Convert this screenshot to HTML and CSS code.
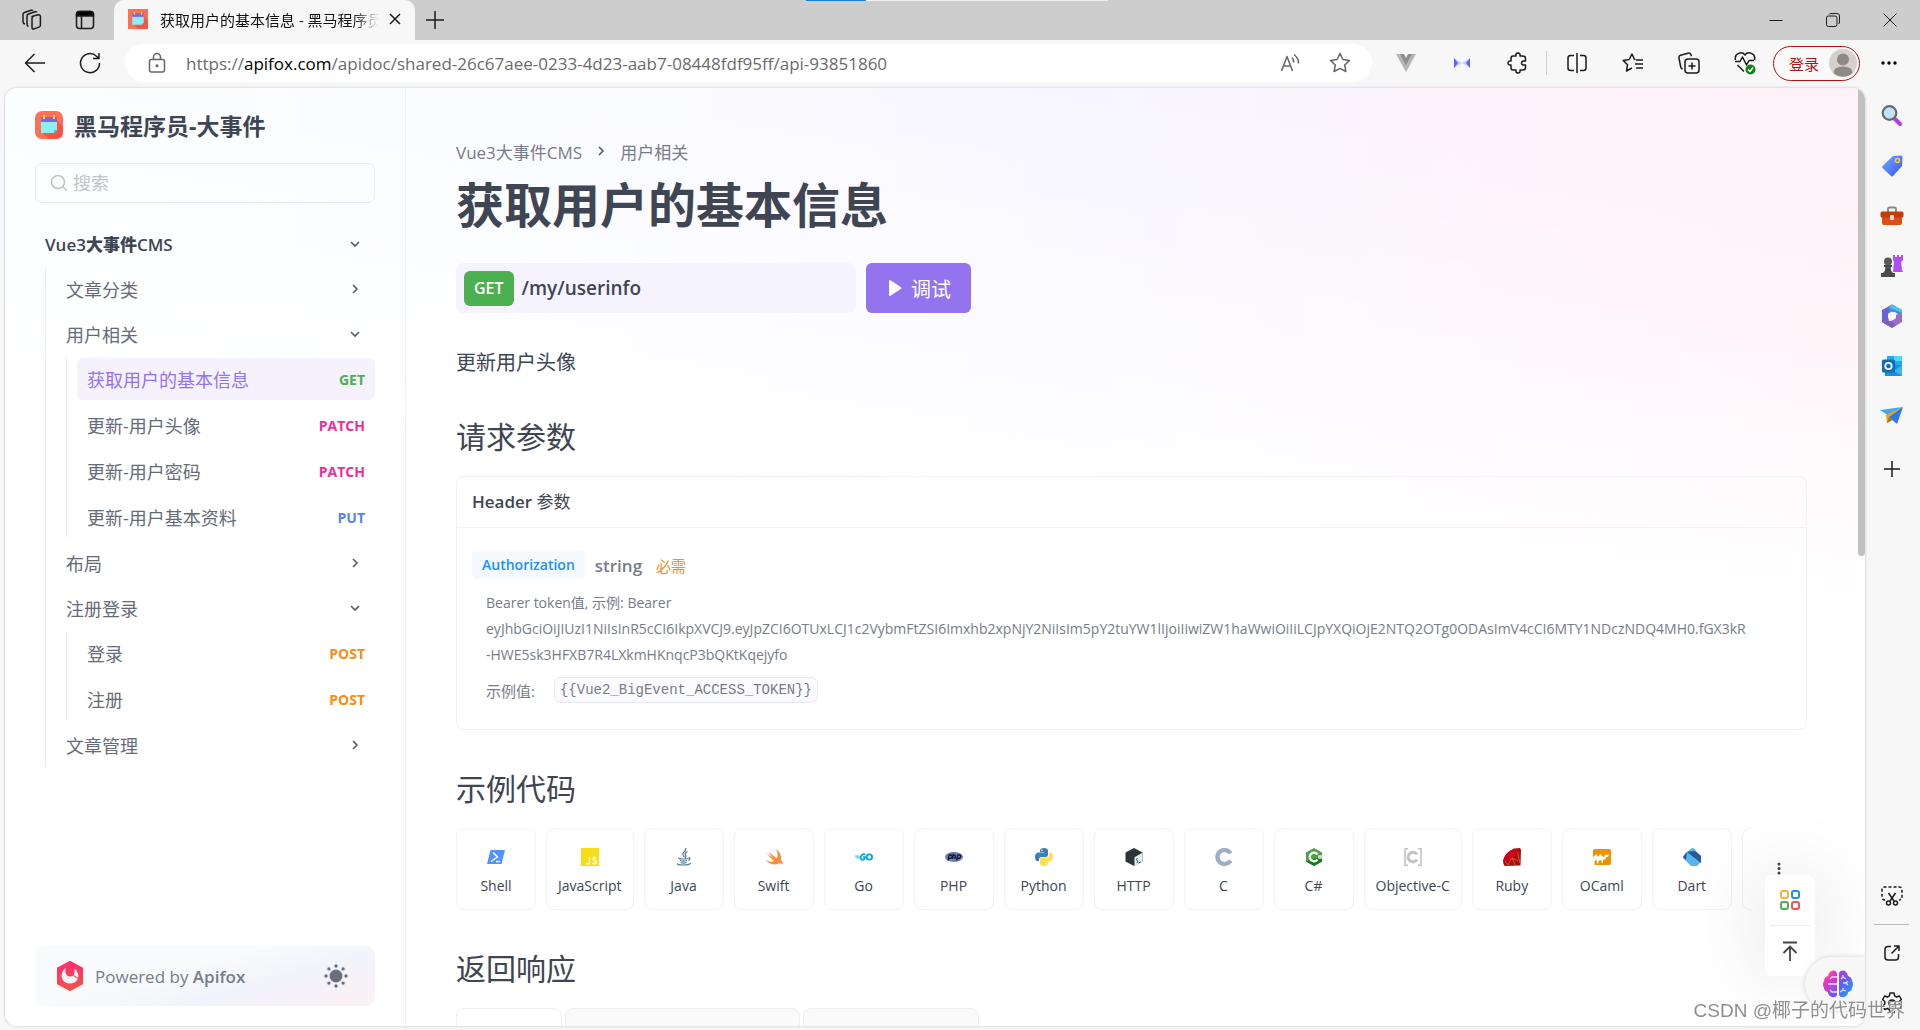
FILE: index.html
```html
<!DOCTYPE html>
<html lang="zh-CN">
<head>
<meta charset="utf-8">
<title>获取用户的基本信息 - 黑马程序员-大事件</title>
<link rel="stylesheet" href="styles.css">
</head>
<body>
<div class="browser">
  <header class="titlebar">
    <button class="tool tool-tabs" aria-label="工作区"><svg width="24" height="24" viewBox="0 0 24 24" class="line"><path d="M12 7.5 18 5.8q2-.4 2.400 1.400v9q0 1.400-1.400 1.900l-5 1.800q-2 .5-2-1.500V9.500q0-1.500 1-2z" transform="translate(0 1)"/><path d="M8.500 18.500q-1.500-.5-1.500-2.500V8q0-1.500 1.500-2L15 3.800q1.500-.4 2 .4M5 16q-2-.5-2-2.500V6.500Q3 5 4.500 4.500L11 2.300q1.500-.4 2 .4"/></svg></button>
    <button class="tool tool-vertical" aria-label="标签操作"><svg width="20" height="20" viewBox="0 0 20 20" class="line"><rect x="1.500" y="1.500" width="17" height="17" rx="3"/><path d="M1.500 6V4.500q0-3 3-3h11q3 0 3 3V6z" fill="#000"/><path d="M6.500 6v12"/></svg></button>
    <div class="tab">
      <svg width="20" height="20" viewBox="0 0 28 28"><rect width="28" height="28" fill="#ff6f55"/><path d="m8 22 13-14 7 8v12H14z" fill="#f45746"/><path d="M6 9h16v10l-3 3H6z" fill="#8ceef5"/><path d="M6 6h16v5H6z" fill="#7a68dc"/><path d="M9 4v4M19 4v4" stroke="#ffd23f" stroke-width="2"/></svg>
      <span class="tab-title">获取用户的基本信息 - 黑马程序员-大事件</span>
      <button class="tool tab-close" aria-label="关闭标签页"><svg width="12" height="12" viewBox="0 0 12 12" class="line"><path d="m1 1 10 10M11 1 1 11"/></svg></button>
    </div>
    <button class="tool tab-new" aria-label="新建标签页"><svg width="18" height="18" viewBox="0 0 18 18" class="line"><path d="M9 0v18M0 9h18"/></svg></button>
    <span class="preview-strip"></span>
    <div class="window-buttons">
      <button class="tool" aria-label="最小化"><svg width="14" height="14" viewBox="0 0 14 14" class="thin"><path d="M.5 7.500h13"/></svg></button>
      <button class="tool" aria-label="还原"><svg width="14" height="14" viewBox="0 0 14 14" class="thin"><rect x=".5" y="3" width="10.500" height="10.500" rx="2"/><path d="M3 1.500Q3.500.5 5 .5h6q2.500 0 2.500 2.500v6q0 1.500-1 2"/></svg></button>
      <button class="tool" aria-label="关闭"><svg width="14" height="14" viewBox="0 0 14 14" class="thin"><path d="m.5.5 13 13m0-13-13 13"/></svg></button>
    </div>
  </header>

  <div class="toolbar">
    <button class="tool nav-tool" aria-label="返回"><svg width="22" height="20" viewBox="0 0 22 20" class="line"><path d="M21 10H1.500M10.500 1l-9 9 9 9"/></svg></button>
    <button class="tool nav-tool" aria-label="刷新"><svg width="22" height="22" viewBox="0 0 22 22" class="line"><path d="M20.500 11A9.500 9.500 0 1 1 17.500 4.200L20 6.500M20 1v5.500h-6"/></svg></button>
    <div class="address">
      <svg width="18" height="22" viewBox="0 0 18 22" class="line gray"><rect x="1.500" y="7.500" width="15" height="12.500" rx="2"/><path d="M5.500 7.500V5a3.500 3.500 0 0 1 7 0v2.500"/><circle cx="9" cy="13.800" r=".8" fill="#666"/></svg>
      <div class="url" role="textbox" aria-label="地址栏">https://<span class="host">apifox.com</span>/apidoc/shared-26c67aee-0233-4d23-aab7-08448fdf95ff/api-93851860</div>
      <button class="tool addr-tool" aria-label="大声朗读"><svg width="20" height="20" viewBox="0 0 20 20" class="line gray"><path d="M1.500 18 7 3.500 12.500 18M3.500 13h7M12 4.500q2 2 1.500 5M14 1.500q5 4 4.500 9"/></svg></button>
      <button class="tool addr-tool" aria-label="收藏"><svg width="22" height="22" viewBox="0 0 22 22" class="line gray"><path d="m11 1.500 2.900 6 6.600.9-4.800 4.600 1.200 6.500-5.900-3.100-5.900 3.100 1.200-6.500L1.500 8.400l6.600-.9z"/></svg></button>
    </div>
    <div class="extensions">
      <button class="tool ext" aria-label="Vue"><svg width="20" height="20" viewBox="0 0 20 20"><path d="M0 1h7l3 5 3-5h7L10 19z" fill="#b5b5b5"/><path d="M4 1h4l2 4 2-4h4l-6 11z" fill="#8e8e8e"/></svg></button>
      <button class="tool ext" aria-label="扩展"><svg width="16" height="12" viewBox="0 0 16 12"><path d="M0 1l8 5-8 5zM16 1 8 6l8 5z" fill="#c9cdff"/><path d="m0 1 4 5-4 5zM16 1l-4 5 4 5z" fill="#5968f8"/></svg></button>
      <button class="tool ext" aria-label="浏览器扩展"><svg width="22" height="22" viewBox="0 0 22 22" class="line"><path d="M6 4h3q-.5-3 2-3t2 3h3q2.500 0 2.500 2.500V9q-4-.5-4 2t4 2v2.500Q18.500 18 16 18h-3q.5 3-2 3t-2-3H6q-2 0-2-2.500V13q-3 .5-3-2t3-2V6.500Q4 4 6 4z"/></svg></button>
      <span class="ext-divider"></span>
      <button class="tool ext" aria-label="分屏"><svg width="20" height="20" viewBox="0 0 20 20" class="line"><path d="M7 2.500H3.500Q1 2.500 1 5v10q0 2.500 2.500 2.500H7M13 2.500h3.500Q19 2.500 19 5v10q0 2.500-2.500 2.500H13M10 0v20"/></svg></button>
      <button class="tool ext" aria-label="收藏夹"><svg width="22" height="22" viewBox="0 0 22 22" class="line"><path d="M13.500 7.500h-1L10 2 7.200 7.500l-6 .9 4.300 4.300-1 6.300 5.500-3M14 8h7M13 12h8M14 16h7"/></svg></button>
      <button class="tool ext" aria-label="集锦"><svg width="22" height="22" viewBox="0 0 22 22" class="line"><rect x="7" y="7" width="14" height="14" rx="3"/><path d="M14 10.500v7M10.500 14h7M4.500 17Q3 16.500 2.500 14L1 6q-.5-2 1.500-2.700L10 1.200q2-.5 3 1.500l.5 1.500"/></svg></button>
      <button class="tool ext" aria-label="浏览器概要"><svg width="22" height="24" viewBox="0 0 22 24" class="line"><path d="M1.500 9C0 2 8 0 11 4c3-4 11-2 9.500 5M1 10.500h5L8.500 6l4 8 2.500-4.500h5M3.500 14l6.500 6.500"/><circle cx="16.500" cy="18.500" r="5" fill="#128012" stroke="none"/><path d="m14 18.500 2 2 3-4" stroke="#fff"/></svg></button>
      <button class="login">登录<svg width="28" height="28" viewBox="0 0 28 28"><circle cx="14" cy="14" r="14" fill="#d3d0cd"/><circle cx="14" cy="10.500" r="6" fill="#8e8986"/><path d="M4.500 24q0-6.500 9.500-6.500t9.500 6.500a14 14 0 0 1-19 0z" fill="#8e8986"/></svg></button>
      <button class="tool more" aria-label="更多"><svg width="18" height="6" viewBox="0 0 18 6"><circle cx="3" cy="3" r="1.700"/><circle cx="9" cy="3" r="1.700"/><circle cx="15" cy="3" r="1.700"/></svg></button>
    </div>
  </div>

  <div class="stage">
    <div class="page">
      <aside class="sidebar">
        <div class="brand">
          <svg width="28" height="28" viewBox="0 0 28 28"><rect width="28" height="28" rx="7" fill="#ff7058"/><path d="m8 22 13-14 7 8v5q0 7-7 7h-7z" fill="#fb5243"/><path d="M6 9h16v10l-3 3H6z" fill="#8ceef5"/><path d="m22 19-3 3v-3z" fill="#3cc1dc"/><path d="M6 6h16v5H6z" fill="#7a68dc"/><path d="M9 4v4M19 4v4" stroke="#ffd23f" stroke-width="2"/></svg>
          <span>黑马程序员-大事件</span>
        </div>
        <label class="search">
          <svg width="18" height="18" viewBox="0 0 18 18"><circle cx="8" cy="8" r="6.500"/><path d="m12.800 12.800 4 4"/></svg>
          <input type="search" placeholder="搜索" aria-label="搜索">
        </label>
        <nav class="tree">
          <a href="#" class="row root"><span>Vue3<b>大事件</b>CMS</span><svg class="chev" viewBox="0 0 10 10"><path d="m1 3 4 4 4-4"/></svg></a>
          <div class="branch">
            <a href="#" class="row"><span>文章分类</span><svg class="chev" viewBox="0 0 10 10"><path d="m3 1 4 4-4 4"/></svg></a>
            <a href="#" class="row"><span>用户相关</span><svg class="chev" viewBox="0 0 10 10"><path d="m1 3 4 4 4-4"/></svg></a>
            <div class="branch leafs">
              <a href="#" class="leaf active"><span>获取用户的基本信息</span><b class="get">GET</b></a>
              <a href="#" class="leaf"><span>更新-用户头像</span><b class="patch">PATCH</b></a>
              <a href="#" class="leaf"><span>更新-用户密码</span><b class="patch">PATCH</b></a>
              <a href="#" class="leaf"><span>更新-用户基本资料</span><b class="put">PUT</b></a>
            </div>
            <a href="#" class="row"><span>布局</span><svg class="chev" viewBox="0 0 10 10"><path d="m3 1 4 4-4 4"/></svg></a>
            <a href="#" class="row"><span>注册登录</span><svg class="chev" viewBox="0 0 10 10"><path d="m1 3 4 4 4-4"/></svg></a>
            <div class="branch leafs">
              <a href="#" class="leaf"><span>登录</span><b class="post">POST</b></a>
              <a href="#" class="leaf"><span>注册</span><b class="post">POST</b></a>
            </div>
            <a href="#" class="row"><span>文章管理</span><svg class="chev" viewBox="0 0 10 10"><path d="m3 1 4 4-4 4"/></svg></a>
          </div>
        </nav>
        <div class="powered">
          <svg width="28" height="30" viewBox="0 0 28 30"><defs><linearGradient id="fox" x1="0" y1="0" x2="0" y2="1"><stop offset="0" stop-color="#ff2e6c"/><stop offset="1" stop-color="#f4524b"/></linearGradient></defs><path d="M14 1 26 7.500v15L14 29 2 22.500v-15z" fill="url(#fox)" stroke="url(#fox)" stroke-width="2" stroke-linejoin="round"/><path d="M9.500 7C3 12 5 22.500 14 22.500S25 13 18.500 7.500q1 8-4.500 8T9.500 7z" fill="#f6f2f4"/><path d="m17 14 5 3.500" stroke="#f0687c" stroke-width="1.500"/></svg>
          <a href="#">Powered by <b>Apifox</b></a>
          <button class="tool" aria-label="切换主题"><svg width="24" height="24" viewBox="0 0 24 24" fill="#6b6f7d"><circle cx="12" cy="12" r="6.500"/><g><circle cx="12" cy="2" r="1.700"/><circle cx="12" cy="22" r="1.700"/><circle cx="2" cy="12" r="1.700"/><circle cx="22" cy="12" r="1.700"/><circle cx="4.900" cy="4.900" r="1.700"/><circle cx="19.100" cy="4.900" r="1.700"/><circle cx="4.900" cy="19.100" r="1.700"/><circle cx="19.100" cy="19.100" r="1.700"/></g></svg></button>
        </div>
      </aside>

      <main class="doc">
        <nav class="crumbs"><a href="#">Vue3大事件CMS</a><svg class="chev" viewBox="0 0 10 10"><path d="m3 1 4 4-4 4"/></svg><a href="#">用户相关</a></nav>
        <h1>获取用户的基本信息</h1>
        <div class="endpoint">
          <div class="path"><b>GET</b><span>/my/userinfo</span></div>
          <button class="debug"><svg width="14" height="18" viewBox="0 0 14 18"><path d="M2 2v14l10.500-7z" fill="#fff" stroke="#fff" stroke-width="2" stroke-linejoin="round"/></svg>调试</button>
        </div>
        <p class="summary">更新用户头像</p>

        <h2>请求参数</h2>
        <section class="params">
          <h3><b>Header</b> 参数</h3>
          <div class="param">
            <div class="param-head"><b class="name">Authorization</b><span class="type">string</span><span class="required">必需</span></div>
            <p class="param-desc">Bearer token值, 示例: Bearer<br>eyJhbGciOiJIUzI1NiIsInR5cCI6IkpXVCJ9.eyJpZCI6OTUxLCJ1c2VybmFtZSI6Imxhb2xpNjY2NiIsIm5pY2tuYW1lIjoiIiwiZW1haWwiOiIiLCJpYXQiOjE2NTQ2OTg0ODAsImV4cCI6MTY1NDczNDQ4MH0.fGX3kR<br>-HWE5sk3HFXB7R4LXkmHKnqcP3bQKtKqejyfo</p>
            <div class="example"><span>示例值:</span><code>{{Vue2_BigEvent_ACCESS_TOKEN}}</code></div>
          </div>
        </section>

        <h2>示例代码</h2>
        <div class="langs-wrap">
          <div class="langs">
            <button class="lang"><svg viewBox="0 0 18 18"><path d="M3.500 2H18l-3.500 14H0z" fill="#5391fe"/><path d="m6 4.500 4.500 4.500-6.500 4.500M9 13.500h4" fill="none" stroke="#fff" stroke-width="1.500"/></svg>Shell</button>
            <button class="lang"><svg viewBox="0 0 18 18"><path d="M0 0h18v18H0z" fill="#f5de19"/><path d="M8.500 9v5.500q0 1.500-1.500 1.500t-1.500-1.300M15.500 10q-3.500-1.700-3.500.8 0 1.200 1.800 1.700t1.700 1.800q-.3 2.500-4 .7" fill="none" stroke="#fff" stroke-width="1.400"/></svg>JavaScript</button>
            <button class="lang"><svg viewBox="0 0 18 18" fill="none" stroke="#4e7896" stroke-width="1.200"><path d="M10.500 0q1 2-1.500 4t.5 5M12.500 3.500Q9.500 5 10.500 7t-.5 3M4 9.500q-1 1.500 4 1.500t5-1M13.500 9.500q3 0 0 3M5 12.500q4 1.200 7 0M5.500 14.500q3 1.200 6 0M3 15.500q-2 1.500 5 1.500t7.500-2"/></svg>Java</button>
            <button class="lang"><svg viewBox="0 0 18 18"><path d="M11 1q6 4.500 4.800 10.500 2.400 3 1.700 5-1.500-2-4-1Q7 18.500.5 12q5 3 8.500 1Q4.500 9.500 1.500 5q4 3.500 6.500 5Q5 6.500 3.500 3.500q4 4 8.500 7Q13.500 6 11 1z" fill="#fd8a3b"/></svg>Swift</button>
            <button class="lang"><svg viewBox="0 0 20 18" fill="none" stroke="#00acd7"><path d="M0 8h5M1.500 10H5" stroke-width="1"/><path d="M11.500 6.500q-2-1.500-4 .5t-1 4q2 2 4 0l.8-1.800H9" stroke-width="2"/><ellipse cx="16" cy="9" rx="3" ry="3" stroke-width="2"/></svg>Go</button>
            <button class="lang"><svg viewBox="0 0 18 18"><ellipse cx="9" cy="9" rx="9" ry="5" fill="#6f7cb6"/><path d="M3 12.500 4.200 7h2q1.500.3.800 2t-3 1.500M7.500 11 8.800 5.500M8.300 7.500q2.500-.7 2 1l-.5 2.500M11.500 12.500 12.700 7h1.800q1.700.3 1 2t-3 1.500" fill="none" stroke="#111833" stroke-width="1.300"/></svg>PHP</button>
            <button class="lang"><svg viewBox="0 0 18 18"><path d="M9 0q4 0 4 2.500v4Q13 9 10.500 9h-4Q4 9 4 11.500v1.500H2.500Q0 13 0 9t3-4.500h6V4H5V2.500Q5 0 9 0z" fill="#3c7fb3"/><path d="M9 18q-4 0-4-2.500v-4Q5 9.500 7.500 9.500h4Q14 9.500 14 7V5h1.500Q18 5 18 9t-3 4.500H9v.5h4v1.500Q13 18 9 18z" fill="#ffdf4f"/><circle cx="7" cy="2.200" r=".8" fill="#fff"/><circle cx="11" cy="15.800" r=".8" fill="#fff"/></svg>Python</button>
            <button class="lang"><svg viewBox="0 0 18 18"><path d="M9 0l8.500 4.500v9L9 18 .5 13.500v-9z" fill="#2c3535"/><path d="m17.500 4.700-8 4.500V18l8-4.500z" fill="#dceef0"/><path d="M12.500 10q-2 1.500-.3 2.500t-.5 2.500M13.500 15l2-1" stroke="#3a5550" fill="none"/></svg>HTTP</button>
            <button class="lang"><svg viewBox="0 0 18 18"><path d="M15.500 5.500A7 7 0 1 0 15.500 12.500" fill="none" stroke="#9bafc8" stroke-width="4.300"/></svg>C</button>
            <button class="lang"><svg viewBox="0 0 18 18"><path d="M9 0l8 4.500v9L9 18 1 13.500v-9z" fill="#4da04a"/><path d="m1 13.500 16-5v5L9 18z" fill="#167b16"/><path d="M12.500 6.500A4.300 4.300 0 1 0 12.500 11.500" fill="none" stroke="#fff" stroke-width="2.300"/><path d="M13 8.200h4M13 9.900h4M14 7v4M15.800 7v4" stroke="#fff" stroke-width=".8"/></svg>C#</button>
            <button class="lang"><svg viewBox="0 0 18 18" fill="none" stroke="#c4c4c4"><path d="M4 .8H1v16.400h3M14 .8h3v16.400h-3" stroke-width="1.600"/><path d="M13 6.500A4.800 4.800 0 1 0 13 11.500" stroke-width="3"/></svg>Objective-C</button>
            <button class="lang"><svg viewBox="0 0 18 18"><path d="M11 .5 17 0l1 2-.5 15.500L2 18q-2-1-2-6Q3 4 11 .5z" fill="#a61206"/><path d="M10.500 2q4-1 4 1.500T9 10t-7 3q-2-2 .5-6t8-5z" fill="#d0021b"/><path d="M14.500 4.500 17 15M9 10l3 7M2 13l3 4 4-7 6 3" fill="none" stroke="#f06a58" stroke-width=".7"/></svg>Ruby</button>
            <button class="lang"><svg viewBox="0 0 18 18"><rect y="1" width="18" height="16" rx="2" fill="#f29100"/><path d="M0 9q2-1 3-3 1 1 2 3l2-3q2 1 3 3 2 0 2-2l4-.5-1 2q-2 0-3 3l-2 .5v3H9l-1-3-2 .5-1 3H4l-.500-4-2 1.500V17H0z" fill="#fff"/></svg>OCaml</button>
            <button class="lang"><svg viewBox="0 0 18 18"><path d="m4 4 5-4q3 0 4 3l5 5v6l-4 4H8L0 10q0-3 4-6z" fill="#57b6f0"/><path d="M4 4q4-1 8-1l6 5v7L4 4 3 12 0 9z" fill="#255a9b"/></svg>Dart</button>
            <button class="lang" aria-label="更多语言"></button>
          </div>
          <button class="tool langs-more" aria-label="更多"><svg width="4" height="14" viewBox="0 0 4 14" fill="#404554"><circle cx="2" cy="2" r="1.500"/><circle cx="2" cy="6.500" r="1.500"/><circle cx="2" cy="11" r="1.500"/></svg></button>
        </div>

        <h2>返回响应</h2>
        <div class="tabs"><button aria-label="成功"></button><button aria-label="记录不存在"></button><button aria-label="参数错误"></button></div>
      </main>

      <span class="scroll-thumb"></span>
      <div class="float-tools">
        <button aria-label="应用"><svg width="20" height="20" viewBox="0 0 20 20" fill="none" stroke-width="2"><rect x="1" y="1" width="7" height="7" rx="2" stroke="#f9b233"/><rect x="12" y="1" width="7" height="7" rx="2" stroke="#1890ff"/><rect x="1" y="12" width="7" height="7" rx="2" stroke="#4caf50"/><rect x="12" y="12" width="7" height="7" rx="2" stroke="#f94d4f"/></svg></button>
        <button aria-label="回到顶部"><svg width="16" height="20" viewBox="0 0 16 20" fill="none" stroke="#404554" stroke-width="1.800"><path d="M1 1.500h14M8 20V5.500M1.500 12 8 5.500l6.500 6.500"/></svg></button>
      </div>
      <button class="brain" aria-label="助手"><svg width="30" height="28" viewBox="0 0 30 28"><defs><linearGradient id="bl" x1="0" y1="0" x2=".6" y2="1"><stop offset="0" stop-color="#ff9a2f"/><stop offset=".4" stop-color="#f032c0"/><stop offset="1" stop-color="#7558f0"/></linearGradient><linearGradient id="br" x1="0" y1="0" x2=".5" y2="1"><stop offset="0" stop-color="#c832e0"/><stop offset=".5" stop-color="#6060f4"/><stop offset="1" stop-color="#2796ff"/></linearGradient></defs><path d="M14 3v22q-1 3-5 2-4-1-4-5-4-1-4-4-2-4 0-7 0-4 4-5 1-5 5-5.500 3-.5 4 2.500z" fill="url(#bl)"/><path d="M16 3v22q1 3 5 2 4-1 4-5 4-1 4-4 2-4 0-7 0-4-4-5-1-5-5-5.500-3-.5-4 2.500z" fill="url(#br)"/><path d="M14 7H9L7 9M14 14H5M14 22H9l-2-2M18 9l2-2v-2M20 7l3 2M20 13h3l2-2M23 13l2 2M17 22l3-2v-2M20 20l3 1" fill="none" stroke="#fff" stroke-width="1.300" stroke-opacity=".8"/></svg></button>
    </div>

    <aside class="edge-bar">
      <button class="tool" aria-label="搜索"><svg width="22" height="22" viewBox="0 0 22 22"><path d="m14 14 5 5" stroke="#b93af2" stroke-width="4" stroke-linecap="round"/><circle cx="8.500" cy="8" r="6.800" fill="#bfe3fa" stroke="#68696b" stroke-width="2.200"/></svg></button>
      <button class="tool" aria-label="购物"><svg width="22" height="22" viewBox="0 0 22 22"><defs><linearGradient id="tag" x1="0" y1="0" x2="1" y2="1"><stop offset="0" stop-color="#6eb4ff"/><stop offset="1" stop-color="#3a4df5"/></linearGradient></defs><path d="m12 1 8-.5q1.500 0 1.500 1.500l-.5 9-9 10q-1 1-2 0L1.500 13q-1-1 0-2z" fill="url(#tag)"/><circle cx="16.500" cy="5.500" r="2" fill="#5b72ff" stroke="#ffd02e" stroke-width="1.500"/></svg></button>
      <button class="tool" aria-label="工具"><svg width="24" height="20" viewBox="0 0 24 20"><path d="M8 6V3q0-1.500 1.500-1.500h5Q16 1.500 16 3v3" fill="none" stroke="#878787" stroke-width="1.800"/><rect x="2" y="8" width="20" height="11" rx="2" fill="#dc4f17"/><rect x=".5" y="5.500" width="23" height="6" rx="1.500" fill="#c23d0e"/><rect x="10" y="9" width="4" height="5" rx="1" fill="#d9d9d9"/></svg></button>
      <button class="tool" aria-label="游戏"><svg width="24" height="24" viewBox="0 0 24 24"><path d="M13 1h2v2h2V1h2v2h2V1h2v5l-2 2 1 8 1 2H13l1-10-1-2z" fill="#b44bf5"/><circle cx="8" cy="7.500" r="4" fill="#5a5a5a"/><path d="M4 11h8v2h-1.500q0 4 2.500 6h2v4H1v-4h2q2.500-2 2.500-6H4z" fill="#4a4a4a"/></svg></button>
      <button class="tool" aria-label="Microsoft 365"><svg width="22" height="24" viewBox="0 0 22 24"><path d="M11 .5 14 2 8 7v7l-2 7-5-3V6z" fill="#6a63d0"/><path d="m11 .5 10 5.500v7l-7-5-6 1V3.500z" fill="#3b8fe8"/><path d="m8 3.500 3-3L21 6v3z" fill="#4fc0ea"/><path d="M21 9v9l-10 6-7-4 9-5 1-4z" fill="#9a6cc8"/><path d="M1 16v2l10 6 4-3-8-5z" fill="#7b5fc0"/><path d="m11 7.500 4 2.200v4.600l-4 2.200-4-2.200V9.700z" fill="#f7f7f7"/></svg></button>
      <button class="tool" aria-label="Outlook"><svg width="22" height="22" viewBox="0 0 22 22"><path d="M6 1h15v9H6z" fill="#28a8ea"/><path d="M13 1h8v5h-8z" fill="#50d9ff"/><path d="M4 10h17v11H4z" fill="#1490df"/><path d="m21 10-8 6 8 5z" fill="#35b8f1"/><rect x="1" y="4.500" width="13" height="13" rx="1.500" fill="#0f6cbd"/><circle cx="7.500" cy="11" r="3.200" fill="none" stroke="#fff" stroke-width="1.800"/></svg></button>
      <button class="tool" aria-label="Drop"><svg width="24" height="20" viewBox="0 0 24 20"><path d="m0 4 23-3-14 9z" fill="#40a8f2"/><path d="m23 1-17 8 1 8z" fill="#f0a21a"/><path d="M23 1 9 11l8 7z" fill="#2779ea"/><path d="m7 17 2-6 4 3z" fill="#b8750f"/></svg></button>
      <button class="tool edge-add" aria-label="添加"><svg width="16" height="16" viewBox="0 0 16 16" class="line"><path d="M8 0v16M0 8h16"/></svg></button>
      <div class="edge-bottom">
        <button class="tool" aria-label="截图"><svg width="22" height="20" viewBox="0 0 22 20" class="line"><path d="M4 14Q1 14 1 11V4q0-3 3-3h14q3 0 3 3v7q0 3-3 3" stroke-dasharray="3 2"/><path d="m7.500 7 5.500 8M14.500 7 9 15"/><circle cx="7.500" cy="17" r="2"/><circle cx="14.500" cy="17" r="2"/></svg></button>
        <span class="edge-rule"></span>
        <button class="tool" aria-label="外部打开"><svg width="16" height="16" viewBox="0 0 16 16" class="line"><path d="M7 1.500H4Q1 1.500 1 4.500V12q0 3 3 3h7.500q3 0 3-3V9M10 1h5v5M15 1 7.500 8.500"/></svg></button>
        <button class="tool edge-gear" aria-label="设置"><svg width="22" height="22" viewBox="0 0 22 22" class="line"><path d="M9 1h4l.6 2.900 2 1.100 2.800-1 2 3.500L18.200 9.500v2.500l2.200 2-2 3.500-2.800-1-2 1.200L13 21H9l-.6-3.300-2-1.200-2.800 1-2-3.500 2.200-2V9.500L1.600 7.500l2-3.500 2.800 1 2-1.100z"/><circle cx="11" cy="11" r="3"/></svg></button>
      </div>
    </aside>
  </div>
</div>
<span class="watermark">CSDN @椰子的代码世界</span>
</body>
</html>
```
FILE: styles.css
```css
* { box-sizing: border-box; }

body {
  margin: 0;
  font-family: "Open Sans", "Noto Sans CJK SC", sans-serif;
  font-size: 18px;
  color: #404554;
  background: #f7f7f7;
}

button { font: inherit; color: inherit; cursor: pointer; }
a { color: inherit; text-decoration: none; }
svg { flex: none; display: block; }
h1, h2, h3, p { margin: 0; }

.line { fill: none; stroke: #1b1b1b; stroke-width: 1.5; stroke-linejoin: round; }
.thin { fill: none; stroke: #1b1b1b; stroke-width: 1; }
.gray { stroke: #666; }
.chev { width: 10px; height: 10px; fill: none; stroke: #555a68; stroke-width: 1.6; }

.tool {
  display: flex;
  align-items: center;
  justify-content: center;
  padding: 0;
  border: 0;
  background: none;
}

.browser { display: flex; flex-direction: column; height: 100vh; overflow: hidden; }

/* title bar */
.titlebar { position: relative; display: flex; height: 40px; background: #cdcdcd; flex: none; }
.tool-tabs { width: 64px; }
.tool-vertical { width: 42px; }
.tab {
  display: flex;
  align-items: center;
  width: 301px;
  margin-left: 8px;
  padding: 0 12px 2px 14px;
  border-radius: 10px 10px 0 0;
  background: #f7f7f7;
}
.tab-title {
  flex: 1;
  margin-left: 12px;
  overflow: hidden;
  white-space: nowrap;
  font-size: 15px;
  color: #111;
  mask-image: linear-gradient(90deg, #000 88%, transparent);
}
.tab-close { width: 16px; margin-left: 8px; }
.tab-new { width: 40px; }
.preview-strip {
  position: absolute;
  top: 0;
  left: 42%;
  width: 302px;
  height: 1px;
  background: linear-gradient(90deg, #1a7fd4 20%, #f3f3f3 20%);
}
.window-buttons { display: flex; margin-left: auto; padding-right: 2px; }
.window-buttons .tool { width: 57px; }

/* toolbar */
.toolbar { display: flex; align-items: center; height: 48px; padding: 0 2px 2px 7px; flex: none; }
.nav-tool { width: 55px; }
.address {
  display: flex;
  align-items: center;
  flex: 1;
  height: 38px;
  margin-left: 8px;
  padding: 0 17px 0 23px;
  border-radius: 19px;
  background: #fff;
}
.url { flex: 1; margin-left: 20px; font-size: 17px; color: #6b6b6b; white-space: nowrap; }
.host { color: #000; }
.addr-tool { width: 50px; }
.address .addr-tool:last-child { width: 30px; margin-left: 10px; }
.extensions { display: flex; align-items: center; }
.ext { width: 56px; }
.extensions .ext:first-child { margin-left: 6px; }
.ext-divider { width: 1px; height: 24px; margin-right: 2px; background: #cfcfcf; }
.login {
  display: flex;
  align-items: center;
  justify-content: space-between;
  width: 87px;
  height: 35px;
  padding: 0 2px 0 15px;
  border: 1px solid #b01217;
  border-radius: 18px;
  background: #f9f9f9;
  font-size: 15px;
  color: #b01217;
}
.more { width: 58px; }

/* page frame and browser side bar */
.stage { display: flex; flex: 1; min-height: 0; padding: 0 0 4px 5px; }
.page {
  position: relative;
  display: flex;
  flex: 1;
  min-width: 0;
  overflow: hidden;
  border-radius: 12px;
  background:
    linear-gradient(188deg, rgba(255, 255, 255, 0) 8%, #fff 46%),
    linear-gradient(90deg, #f8fdff 0, #f9faff 30%, #f7f6ff 58%, #fef2fc 82%, #fff1f7 100%);
  box-shadow: 0 0 2px 1px #dedede;
}
.edge-bar {
  display: flex;
  flex-direction: column;
  align-items: center;
  width: 55px;
  padding: 3px 2px 0 0;
  flex: none;
}
.edge-bar .tool { height: 50px; width: 50px; }
.edge-bar > .edge-add { margin-top: 3px; }
.edge-bottom { display: flex; flex-direction: column; align-items: center; margin: auto 0 -2px; }
.edge-rule { width: 35px; height: 1px; margin: 3px 0; background: #bbb; }

/* document tree */
.sidebar {
  display: flex;
  flex-direction: column;
  width: 401px;
  padding: 20px 30px 20px;
  border-right: 1px solid #f0f1f4;
  flex: none;
}
.brand { display: flex; align-items: center; gap: 11px; height: 34px; font-size: 23px; font-weight: 700; }
.search {
  display: flex;
  align-items: center;
  gap: 5px;
  height: 40px;
  margin-top: 21px;
  padding: 0 14px;
  border: 1px solid #e9ecf0;
  border-radius: 7px;
}
.search svg { fill: none; stroke: #c0c4cb; stroke-width: 1.6; }
.search input { flex: 1; min-width: 0; padding: 0; border: 0; outline: 0; background: none; font: inherit; }
.search input::placeholder { color: #c0c4cb; }
.tree { margin-top: 18px; padding-left: 10px; color: #666b78; }
.row {
  display: flex;
  align-items: center;
  justify-content: space-between;
  height: 45px;
  padding-right: 15px;
}
.root { font-size: 17px; font-weight: 600; color: #404554; }
.branch { padding-left: 20px; border-left: 1px solid #eff0f3; }
.leafs { margin-bottom: 1px; padding-left: 10px; }
.leaf {
  display: flex;
  align-items: center;
  justify-content: space-between;
  height: 42px;
  margin-bottom: 4px;
  padding: 0 10px;
  border-radius: 6px;
}
.leafs { padding-top: 2px; }
.leaf:last-child { margin-bottom: 2px; }
.leaf b { font-size: 14px; }
.active { background: #f5f2fe; color: #9373ee; }
.get { color: #4caf50; }
.patch { color: #ef2d9c; }
.put { color: #5b7ffa; }
.post { color: #fa8c16; }
.powered {
  display: flex;
  align-items: center;
  height: 60px;
  margin-top: auto;
  padding: 0 27px 0 21px;
  border-radius: 10px;
  background: linear-gradient(165deg, #f9fafb 40%, #f2f4fb 65%, #f7f1f9 80%, #fbf1f4);
  font-size: 17px;
  color: #787c88;
}
.powered a { flex: 1; margin-left: 11px; }
.powered b { font-weight: 600; }

/* document */
.doc { flex: 1; min-width: 0; padding: 50px 58px 0 50px; overflow: hidden; }
.crumbs { display: flex; align-items: center; height: 26px; font-size: 17px; color: #787c88; }
.crumbs .chev { margin: 0 14px; }
h1 { margin-top: 11px; font-size: 48px; line-height: 60px; font-weight: 700; }
.endpoint { display: flex; gap: 10px; margin-top: 28px; }
.path {
  display: flex;
  align-items: center;
  gap: 8px;
  width: 400px;
  height: 50px;
  padding: 0 8px;
  border-radius: 8px;
  background: #f5f3fe;
  font-size: 19px;
  font-weight: 600;
}
.path b {
  padding: 0 10px;
  border-radius: 6px;
  background: #4caf50;
  color: #fff;
  font-size: 16px;
  font-weight: 600;
  line-height: 35px;
}
.debug {
  display: flex;
  align-items: center;
  gap: 9px;
  height: 50px;
  padding: 0 20px 0 22px;
  border: 0;
  border-radius: 6px;
  background: #9373ee;
  color: #fff;
  font-size: 20px;
}
.summary { margin-top: 35px; font-size: 20px; line-height: 30px; }
h2 { margin: 39px 0 19px; font-size: 30px; line-height: 40px; font-weight: 400; }
.params { border: 1px solid #f1f2f6; border-radius: 8px; }
h3 { padding: 0 15px; border-bottom: 1px solid #f1f2f6; font-size: 17px; line-height: 50px; font-weight: 400; }
h3 b { font-weight: 600; }
.param { padding: 23px 15px 26px; }
.param-head { display: flex; align-items: center; height: 28px; }
.name { padding: 0 10px; border-radius: 5px; background: #f4faff; color: #1890ff; font-size: 14px; font-weight: 600; line-height: 28px; }
.type { margin: 0 14px 0 10px; font-size: 17px; font-weight: 600; color: #787c88; }
.required { font-size: 15px; color: #fa8c16; }
.param-desc { margin-top: 11px; padding-left: 14px; font-size: 14px; line-height: 26px; color: #787c88; white-space: nowrap; }
.example { display: flex; align-items: center; gap: 19px; margin-top: 9px; padding-left: 14px; height: 26px; font-size: 15px; color: #787c88; }
code {
  padding: 0 5px;
  border: 1px solid #e7e9ef;
  border-radius: 7px;
  background: #fbfbfd;
  font: 14px/24px "Liberation Mono", monospace;
}
.langs-wrap { display: flex; align-items: center; }
.langs { display: flex; gap: 10px; flex: 1; min-width: 0; overflow: hidden; }
.lang {
  display: flex;
  flex-direction: column;
  align-items: center;
  gap: 10px;
  min-width: 80px;
  height: 82px;
  padding: 19px 11px 0;
  border: 1px solid #f2f3f5;
  border-radius: 8px;
  background: none;
  font-size: 14px;
  line-height: 20px;
  flex: none;
}
.lang svg { width: 18px; height: 18px; }
.langs-more { width: 56px; }
.tabs { display: flex; gap: 3px; }
.tabs button { height: 50px; border: 1px solid #eeeff2; border-radius: 8px 8px 0 0; background: #fafafb; }
.tabs button:nth-child(1) { width: 106px; background: #fff; }
.tabs button:nth-child(2) { width: 235px; }
.tabs button:nth-child(3) { width: 176px; }

/* overlays on the page */
.scroll-thumb { position: absolute; top: 0; right: 0; width: 7px; height: 468px; background: #c1c1c1; border-radius: 0 8px 4px 4px; }
.float-tools {
  position: absolute;
  right: 50px;
  bottom: 50px;
  width: 50px;
  padding: 0 5px;
  border-radius: 8px;
  background: #fff;
  box-shadow: 0 0 80px rgba(0, 0, 0, .13);
}
.float-tools button { display: flex; align-items: center; justify-content: center; width: 100%; height: 50px; padding: 0; border: 0; background: none; }
.float-tools button + button { border-top: 1px solid #eee; height: 51px; }
.brain {
  position: absolute;
  right: 0;
  bottom: 15px;
  display: flex;
  align-items: center;
  width: 60px;
  height: 54px;
  padding: 0 0 0 18px;
  border: 0;
  border-radius: 27px 0 0 27px;
  background: #f7f7f7;
  box-shadow: 0 0 5px #d4d4d4;
}
.watermark {
  position: fixed;
  right: 15px;
  bottom: 6px;
  font: 19px/26px "Liberation Sans", "Noto Sans CJK SC", sans-serif;
  color: #8f8f8f;
  text-shadow: 1px 1px 0 #fff;
}
```
